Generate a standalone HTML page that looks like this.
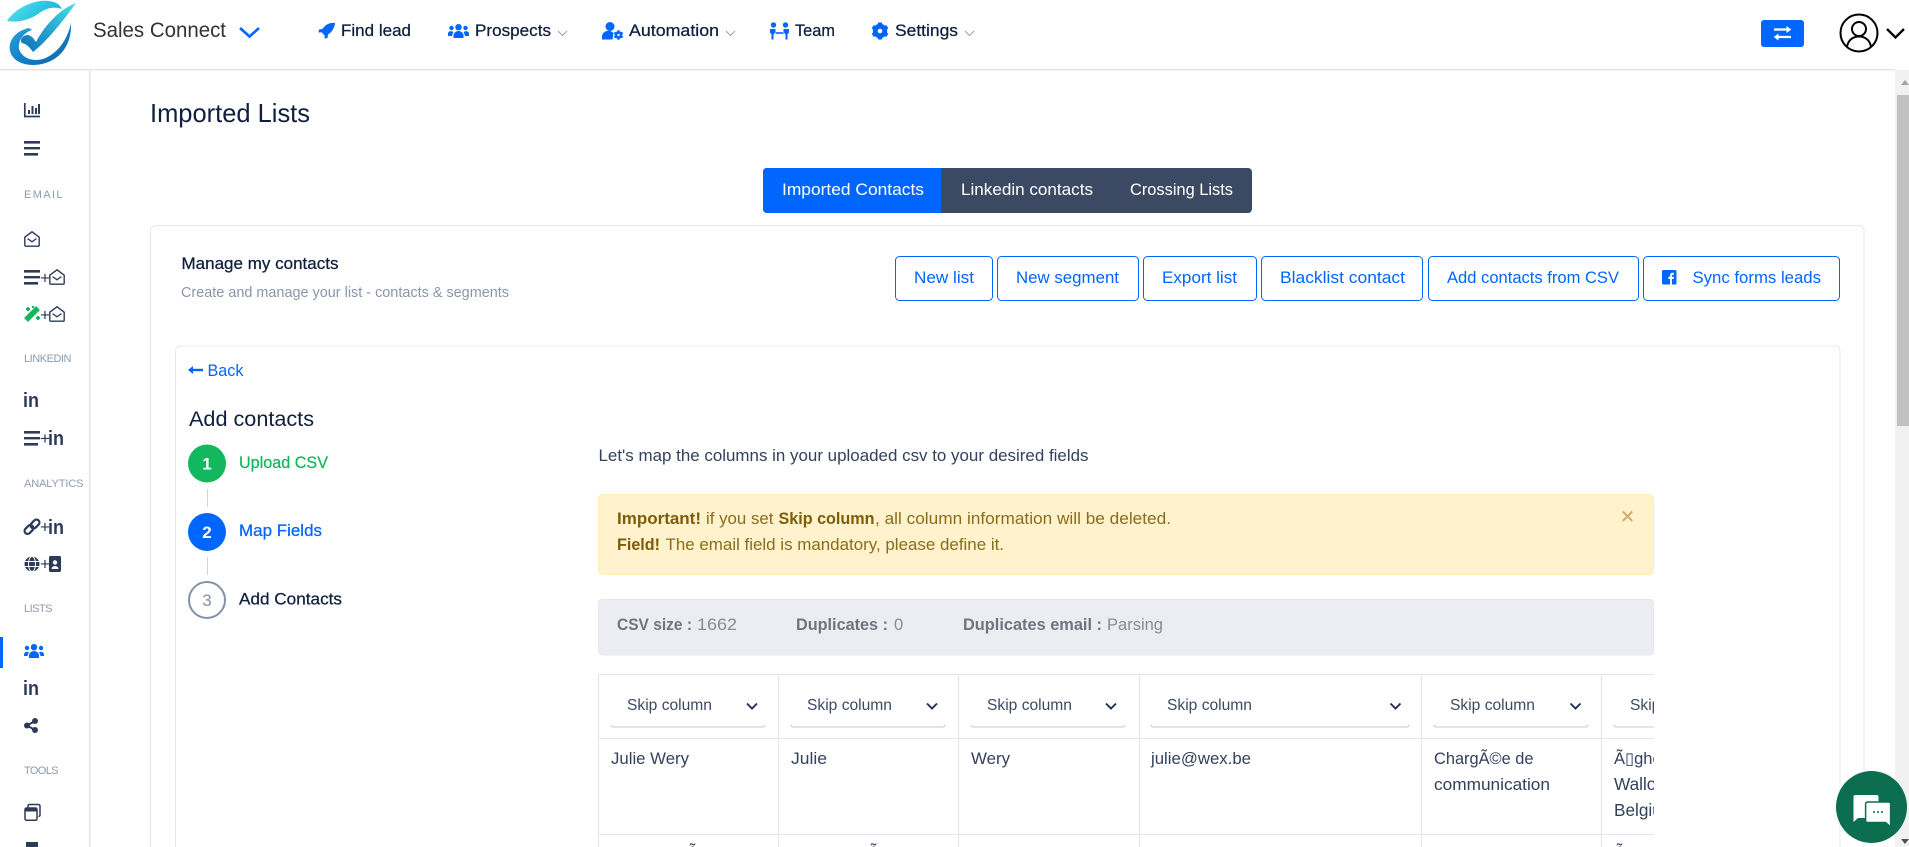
<!DOCTYPE html>
<html lang="en"><head><meta charset="utf-8"><title>Imported Lists</title>
<style>
html,body{margin:0;padding:0;background:#fff;width:1909px;height:847px;overflow:hidden}
svg{display:block}
text{font-family:"Liberation Sans",sans-serif;white-space:pre}
.m{stroke:currentColor;stroke-width:.25}
.nav{font-size:16.5px;fill:#0f1f3d;color:#0f1f3d}
.lb{font-size:11px;fill:#8c9bb0;letter-spacing:.5px}
.t{font-size:16.5px;fill:#33415c}
.sk{font-size:15.5px;fill:#3c4a63}
.bt{font-size:16.5px;fill:#0066ff}
.al{font-size:16.5px;fill:#8a6d1c}
.alb{font-size:16.5px;fill:#7d5c0a;color:#7d5c0a;font-weight:700}
.st{font-size:16.5px;fill:#6f7580;color:#6f7580;font-weight:700}
.sv{font-size:16.5px;fill:#868b95}
.ic{fill:#2d3b59}
.is{fill:none;stroke:#2d3b59;stroke-width:1.5}
.b{fill:#0066ff}
.pl{font-size:17px;fill:#2d3b59}
</style></head><body>
<svg width="1909" height="847" viewBox="0 0 1909 847" xmlns="http://www.w3.org/2000/svg">
<defs>
<linearGradient id="g1" x1="0" y1="0" x2="1" y2="0.4"><stop offset="0" stop-color="#5fe6ef"/><stop offset="1" stop-color="#12b5dc"/></linearGradient>
<linearGradient id="g2" x1="0" y1="0" x2="1" y2="1"><stop offset="0" stop-color="#2ba6e0"/><stop offset=".6" stop-color="#0f7cc4"/><stop offset="1" stop-color="#1a5f9e"/></linearGradient>
<linearGradient id="g3" x1="1" y1="0" x2="0" y2="1"><stop offset="0" stop-color="#45dfe8"/><stop offset="1" stop-color="#0d6fb8"/></linearGradient>
<clipPath id="tc"><rect x="598" y="670" width="1056" height="177"/></clipPath>
<g id="bars"><rect x="0" y="0" width="16" height="2.600" fill="#2d3b59"/><rect x="0" y="6" width="16" height="2.400" fill="#2d3b59"/><rect x="0" y="12" width="14" height="2.600" fill="#2d3b59"/></g>
<g id="mail"><path d="M.8 6.200 8 .8l7.200 5.400V14.200a1 1 0 0 1-1 1H1.800a1 1 0 0 1-1-1Z" fill="none" stroke="#2d3b59" stroke-width="1.400"/><path d="M3.600 7.600 8 10.800l4.400-3.200" fill="none" stroke="#2d3b59" stroke-width="1.300"/></g>
</defs>

<rect x="0" y="0" width="1909" height="847" fill="#fff"/>
<rect x="0" y="69" width="1895" height="1.500" fill="#e4e4ee"/>
<rect x="89" y="70" width="1.500" height="777" fill="#e4e4ee"/>

<rect x="1895" y="70" width="14" height="777" fill="#f1f1f1"/>
<path d="M1901 85l4-5 4 5Z" fill="#a3a3a3"/>
<rect x="1897" y="95" width="12" height="331" fill="#c1c1c1"/>

<!-- logo -->
<path d="M7 21C13 11 27 3 40 1 50 0 59 2 62 9 54 6 46 8 38 14 29 20 17 23 7 21Z" fill="url(#g1)"/>
<path d="M29 28C15 31 8 41 10 51 13 63 28 67 42 64 60 60 72 45 71 23 67 41 57 54 43 59 32 62 22 58 19 49 18 41 23 33 32 30Z" fill="url(#g2)"/>
<path d="M76 3C62 8 46 23 36 42 33 37 29 33 24 36 21 38 20 41 22 43 27 44 30 48 33 52 46 42 61 24 76 3Z" fill="url(#g3)"/>

<text x="93" y="37" font-size="21" fill="#333" textLength="133" lengthAdjust="spacingAndGlyphs">Sales Connect</text>
<path d="M240 28l9.500 8.500L259 28" fill="none" stroke="#0066ff" stroke-width="2.600"/>

<!-- nav -->
<path class="b" d="M335 23c-6-.5-10 2-12.500 6l-3.500.5 -.5 3 3-.2 3.200 3.200-.2 3 3-.5.500-3.500c4-2.500 6.500-6.500 7-11.500Z"/>
<text class="nav m" x="341" y="36" textLength="70" lengthAdjust="spacingAndGlyphs">Find lead</text>

<g class="b" transform="translate(448 24)"><circle cx="10.500" cy="3.200" r="3.200"/><circle cx="3.500" cy="4" r="2.200"/><circle cx="17.500" cy="4" r="2.200"/><path d="M5.500 14v-2.500a5 4.500 0 0 1 10 0V14Z"/><path d="M0 10.500a3 3 0 0 1 5.500-2 6 6 0 0 0-1.500 3.500H0Z"/><path d="M21 10.500a3 3 0 0 0-5.500-2 6 6 0 0 1 1.500 3.500H21Z"/></g>
<text class="nav m" x="475" y="36" textLength="76" lengthAdjust="spacingAndGlyphs">Prospects</text>
<path d="M558 31l4.500 4.500L567 31" fill="none" stroke="#99a1ad" stroke-width="1"/>

<g class="b" transform="translate(602 22)"><circle cx="8" cy="4.500" r="4.500"/><path d="M0 17.500v-2a6.500 6 0 0 1 11.500-4.500l-1 6.500Z"/><g transform="translate(16.500 13)"><circle r="2.700" fill="none" stroke="#0066ff" stroke-width="2.400"/><rect x="-1" y="-4.800" width="2" height="9.600"/><rect x="-1" y="-4.800" width="2" height="9.600" transform="rotate(60)"/><rect x="-1" y="-4.800" width="2" height="9.600" transform="rotate(120)"/><circle r="1.200" fill="#fff"/></g></g>
<text class="nav m" x="629" y="36" textLength="90" lengthAdjust="spacingAndGlyphs">Automation</text>
<path d="M726 31l4.500 4.500L735 31" fill="none" stroke="#99a1ad" stroke-width="1"/>

<g class="b" transform="translate(770 22)"><circle cx="3.500" cy="3" r="2.700"/><circle cx="15.500" cy="3" r="2.700"/><path d="M0 7h5.500v3l-2 2.500v5H1.500v-5L0 10.500Z"/><path d="M19 7h-5.500v3l2 2.500v5h2v-5l1.500-2Z"/><rect x="5.500" y="10.200" width="8" height="1.600"/></g>
<text class="nav m" x="795" y="36" textLength="40" lengthAdjust="spacingAndGlyphs">Team</text>

<g transform="translate(880 31)"><circle r="5.300" fill="none" stroke="#0066ff" stroke-width="3.800"/><g fill="#0066ff"><rect x="-2" y="-8.500" width="4" height="17"/><rect x="-2" y="-8.500" width="4" height="17" transform="rotate(60)"/><rect x="-2" y="-8.500" width="4" height="17" transform="rotate(120)"/></g><circle r="2.300" fill="#fff"/></g>
<text class="nav m" x="895" y="36" textLength="63" lengthAdjust="spacingAndGlyphs">Settings</text>
<path d="M965 31l4.500 4.500L974 31" fill="none" stroke="#99a1ad" stroke-width="1"/>

<rect x="1761" y="20" width="43" height="27" rx="3" fill="#0066ff"/>
<path d="M1774 29.500h15" stroke="#fff" stroke-width="2.300"/><path d="M1786.500 26l4.800 3.500-4.800 3.500Z" fill="#fff"/>
<path d="M1776 37h15" stroke="#fff" stroke-width="2.300"/><path d="M1778.500 33.500l-4.800 3.500 4.800 3.500Z" fill="#fff"/>

<circle cx="1859" cy="33" r="18.500" fill="none" stroke="#000" stroke-width="2"/>
<circle cx="1859" cy="29" r="7" fill="none" stroke="#000" stroke-width="2"/>
<path d="M1847 47c1-7 6-10.500 12-10.500s11 3.500 12 10.500" fill="none" stroke="#000" stroke-width="2"/>
<path d="M1887 29l8.500 8.500L1904 29" fill="none" stroke="#000" stroke-width="2.300"/>

<!-- sidebar -->
<path d="M24.800 103v13.500H40" fill="none" stroke="#2d3b59" stroke-width="1.700"/>
<g fill="#2d3b59"><rect x="28" y="110" width="2" height="4"/><rect x="31.500" y="106" width="2" height="8"/><rect x="35" y="108" width="2" height="6"/><rect x="38" y="104" width="2" height="10"/></g>
<use href="#bars" x="24" y="141"/>
<text class="lb" x="24" y="198" textLength="39">EMAIL</text>
<use href="#mail" x="24" y="231"/>
<use href="#bars" x="24" y="270"/><text class="pl" x="40" y="283.500">+</text><use href="#mail" x="49" y="269"/>
<path d="M26 320l12-12" stroke="#12b85e" stroke-width="5.500"/>
<g fill="#12b85e"><rect x="27" y="307" width="2" height="4"/><rect x="26" y="308" width="4" height="2"/><rect x="37" y="316" width="2" height="4"/><rect x="36" y="317" width="4" height="2"/><rect x="32" y="306" width="2" height="2"/></g>
<text class="pl" x="40" y="320.500">+</text><use href="#mail" x="49" y="306"/>
<text class="lb" x="24" y="362" textLength="48">LINKEDIN</text>
<text x="23" y="407" font-size="20" font-weight="700" fill="#2d3b59" textLength="16" lengthAdjust="spacingAndGlyphs">in</text>
<use href="#bars" x="24" y="431"/><text class="pl" x="40" y="444">+</text>
<text x="48" y="445" font-size="20" font-weight="700" fill="#2d3b59" textLength="16" lengthAdjust="spacingAndGlyphs">in</text>
<text class="lb" x="24" y="487" textLength="60">ANALYTICS</text>
<g fill="none" stroke="#2d3b59" stroke-width="2.200"><rect x="24" y="526.500" width="10" height="6" rx="3" transform="rotate(-45 29 529.500)"/><rect x="30" y="521" width="10" height="6" rx="3" transform="rotate(-45 35 524)"/></g>
<text class="pl" x="40" y="532.500">+</text>
<text x="48" y="534" font-size="20" font-weight="700" fill="#2d3b59" textLength="16" lengthAdjust="spacingAndGlyphs">in</text>
<circle cx="32" cy="564" r="7.500" class="ic"/><g stroke="#fff" stroke-width="1" fill="none"><path d="M24.500 561.500h15M24.500 566.500h15"/><ellipse cx="32" cy="564" rx="3.500" ry="7.500"/></g>
<text class="pl" x="40" y="569.500">+</text>
<rect x="49" y="556" width="12" height="16" rx="1.500" class="ic"/><circle cx="55" cy="562.500" r="2.200" fill="#fff"/><path d="M51.500 569a3.500 3 0 0 1 7 0Z" fill="#fff"/>
<text class="lb" x="24" y="612" textLength="29">LISTS</text>
<rect x="0" y="637" width="3" height="31" fill="#0066ff"/>
<g class="b" transform="translate(24 644)"><circle cx="10" cy="3.200" r="3.200"/><circle cx="3" cy="4" r="2.200"/><circle cx="17" cy="4" r="2.200"/><path d="M5 14v-2.500a5 4.500 0 0 1 10 0V14Z"/><path d="M0 10.500a3 3 0 0 1 5-2 6 6 0 0 0-1.500 3.500H0Z"/><path d="M20 10.500a3 3 0 0 0-5-2 6 6 0 0 1 1.500 3.500H20Z"/></g>
<text x="23" y="695" font-size="20" font-weight="700" fill="#2d3b59" textLength="16" lengthAdjust="spacingAndGlyphs">in</text>
<path d="M35 721l-8 4.500 8 4.500" fill="none" stroke="#2d3b59" stroke-width="2"/><g class="ic"><circle cx="35" cy="721" r="3"/><circle cx="27" cy="725.500" r="3"/><circle cx="35" cy="730" r="3"/></g>
<text class="lb" x="24" y="774" textLength="35">TOOLS</text>
<path d="M28 808v-2a1.500 1.500 0 0 1 1.500-1.500h9a1.500 1.500 0 0 1 1.500 1.500v9a1.500 1.500 0 0 1-1.500 1.500" fill="none" stroke="#2d3b59" stroke-width="1.500"/>
<rect x="25" y="808" width="12" height="12.300" rx="1.500" fill="#fff" stroke="#2d3b59" stroke-width="1.500"/><rect x="25" y="808" width="12" height="3.500" fill="#2d3b59"/>
<rect x="26" y="842" width="12" height="5" class="ic"/>

<!-- title + tabs -->
<text x="150" y="122" font-size="26" fill="#0f1f3d" textLength="160" lengthAdjust="spacingAndGlyphs">Imported Lists</text>
<rect x="763" y="168" width="489" height="45" rx="4" fill="#3b4963"/>
<path d="M767 168h174v45H767a4 4 0 0 1-4-4v-37a4 4 0 0 1 4-4Z" fill="#0066ff"/>
<text x="782" y="195" font-size="16.500" fill="#fff" textLength="142" lengthAdjust="spacingAndGlyphs">Imported Contacts</text>
<text x="961" y="195" font-size="16.500" fill="#fff" textLength="132" lengthAdjust="spacingAndGlyphs">Linkedin contacts</text>
<text x="1130" y="195" font-size="16.500" fill="#fff" textLength="103" lengthAdjust="spacingAndGlyphs">Crossing Lists</text>

<!-- outer card -->
<path d="M150.500 847V230.500a5 5 0 0 1 5-5H1859a5 5 0 0 1 5 5V847" fill="none" stroke="#e6e8f0" stroke-width="1"/>
<text x="181.500" y="269" font-size="16.500" fill="#0f1f3d" color="#0f1f3d" class="m" textLength="157" lengthAdjust="spacingAndGlyphs">Manage my contacts</text>
<text x="181" y="297" font-size="14.500" fill="#8a96a8" textLength="328" lengthAdjust="spacingAndGlyphs">Create and manage your list - contacts &amp; segments</text>

<g fill="#fff" stroke="#0066ff" stroke-width="1">
<rect x="895.500" y="256.500" width="97" height="44" rx="4"/>
<rect x="997.500" y="256.500" width="141" height="44" rx="4"/>
<rect x="1143.500" y="256.500" width="113" height="44" rx="4"/>
<rect x="1261.500" y="256.500" width="161" height="44" rx="4"/>
<rect x="1428.500" y="256.500" width="210" height="44" rx="4"/>
<rect x="1643.500" y="256.500" width="196" height="44" rx="4"/>
</g>
<text class="bt" x="914" y="283" textLength="60" lengthAdjust="spacingAndGlyphs">New list</text>
<text class="bt" x="1016" y="283" textLength="103" lengthAdjust="spacingAndGlyphs">New segment</text>
<text class="bt" x="1162" y="283" textLength="75" lengthAdjust="spacingAndGlyphs">Export list</text>
<text class="bt" x="1280" y="283" textLength="125" lengthAdjust="spacingAndGlyphs">Blacklist contact</text>
<text class="bt" x="1447" y="283" textLength="172" lengthAdjust="spacingAndGlyphs">Add contacts from CSV</text>
<rect x="1662" y="270" width="14.500" height="14.500" rx="1.500" fill="#0066ff"/>
<path d="M1670 284.500v-5.500h-1.700v-2.200h1.700v-1.500c0-1.700 1-2.500 2.400-2.500h1.500v2h-1c-.7 0-1 .4-1 1v1h2l-.3 2.200h-1.700v5.500Z" fill="#fff"/>
<text class="bt" x="1692.500" y="283" textLength="128.500" lengthAdjust="spacingAndGlyphs">Sync forms leads</text>

<!-- inner card -->
<path d="M175.500 847V351a5 5 0 0 1 5-5H1835a5 5 0 0 1 5 5V847" fill="none" stroke="#e6e8f0" stroke-width="1"/>
<path d="M193 366l-5 4 5 4Z" fill="#0066ff"/><rect x="192" y="368.800" width="11" height="2.400" fill="#0066ff"/>
<text x="207.500" y="376" font-size="16.500" fill="#0066ff" textLength="36" lengthAdjust="spacingAndGlyphs">Back</text>
<text x="189" y="426" font-size="21.500" fill="#0f1f3d" textLength="125" lengthAdjust="spacingAndGlyphs">Add contacts</text>

<!-- stepper -->
<circle cx="207" cy="463.500" r="19" fill="#12b85e"/>
<text x="207" y="469.500" font-size="17" font-weight="700" fill="#fff" text-anchor="middle">1</text>
<rect x="207" y="489" width="1" height="18" fill="#cfd3da"/>
<circle cx="207" cy="532" r="19" fill="#0066ff"/>
<text x="207" y="538" font-size="17" font-weight="700" fill="#fff" text-anchor="middle">2</text>
<rect x="207" y="557" width="1" height="18" fill="#cfd3da"/>
<circle cx="207" cy="600" r="18" fill="#fff" stroke="#8492a6" stroke-width="2"/>
<text x="207" y="606" font-size="17" fill="#8492a6" text-anchor="middle">3</text>
<text x="239" y="468" font-size="16.500" fill="#12b85e" color="#12b85e" class="m" textLength="89" lengthAdjust="spacingAndGlyphs">Upload CSV</text>
<text x="239" y="536" font-size="16.500" fill="#0066ff" color="#0066ff" class="m" textLength="83" lengthAdjust="spacingAndGlyphs">Map Fields</text>
<text x="239" y="604.500" font-size="16.500" fill="#0f1f3d" color="#0f1f3d" class="m" textLength="103" lengthAdjust="spacingAndGlyphs">Add Contacts</text>

<!-- right column -->
<text class="t" x="598.500" y="461" textLength="490" lengthAdjust="spacingAndGlyphs">Let's map the columns in your uploaded csv to your desired fields</text>

<rect x="598.500" y="494.500" width="1055" height="80" rx="4" fill="#fff2cc" stroke="#ffeeba"/>
<text class="alb" x="617" y="524" textLength="84" lengthAdjust="spacingAndGlyphs">Important!</text>
<text class="al" x="706" y="524" textLength="67.500" lengthAdjust="spacingAndGlyphs">if you set</text>
<text class="alb" x="778.500" y="524" textLength="96" lengthAdjust="spacingAndGlyphs">Skip column</text>
<text class="al" x="875" y="524" textLength="296" lengthAdjust="spacingAndGlyphs">, all column information will be deleted.</text>
<text class="alb" x="617" y="550" textLength="43" lengthAdjust="spacingAndGlyphs">Field!</text>
<text class="al" x="665.500" y="550" textLength="338.500" lengthAdjust="spacingAndGlyphs">The email field is mandatory, please define it.</text>
<path d="M1622.800 511.500l9.500 9.500M1632.300 511.500l-9.500 9.500" stroke="#c9b06b" stroke-width="2" fill="none"/>

<rect x="598.500" y="599.500" width="1055" height="55.500" rx="4" fill="#ecedf2" stroke="#e6e7ed"/>
<text class="st" x="617" y="630" textLength="75" lengthAdjust="spacingAndGlyphs">CSV size :</text>
<text class="sv" x="697" y="630" textLength="40" lengthAdjust="spacingAndGlyphs">1662</text>
<text class="st" x="796" y="630" textLength="92" lengthAdjust="spacingAndGlyphs">Duplicates :</text>
<text class="sv" x="894" y="630">0</text>
<text class="st" x="963" y="630" textLength="139" lengthAdjust="spacingAndGlyphs">Duplicates email :</text>
<text class="sv" x="1107" y="630" textLength="56" lengthAdjust="spacingAndGlyphs">Parsing</text>

<!-- table -->
<g clip-path="url(#tc)">
<g fill="#e3e4ef">
<rect x="598" y="674" width="1056" height="1"/>
<rect x="598" y="738" width="1056" height="1"/>
<rect x="598" y="834" width="1056" height="1"/>
<rect x="598" y="674" width="1" height="173"/>
<rect x="778" y="674" width="1" height="173"/>
<rect x="958" y="674" width="1" height="173"/>
<rect x="1139" y="674" width="1" height="173"/>
<rect x="1421" y="674" width="1" height="173"/>
<rect x="1601" y="674" width="1" height="173"/>
</g>
<g fill="none" stroke="#c3c9d4" stroke-width="1">
<path d="M611 724.500q0 2.500 3 2.500h148q3 0 3-2.500"/>
<path d="M791 724.500q0 2.500 3 2.500h148q3 0 3-2.500"/>
<path d="M971 724.500q0 2.500 3 2.500h148q3 0 3-2.500"/>
<path d="M1151 724.500q0 2.500 3 2.500h252q3 0 3-2.500"/>
<path d="M1434 724.500q0 2.500 3 2.500h148q3 0 3-2.500"/>
<path d="M1614 724.500q0 2.500 3 2.500h148q3 0 3-2.500"/>
</g>
<text class="sk" x="627" y="710" textLength="85" lengthAdjust="spacingAndGlyphs">Skip column</text>
<text class="sk" x="807" y="710" textLength="85" lengthAdjust="spacingAndGlyphs">Skip column</text>
<text class="sk" x="987" y="710" textLength="85" lengthAdjust="spacingAndGlyphs">Skip column</text>
<text class="sk" x="1167" y="710" textLength="85" lengthAdjust="spacingAndGlyphs">Skip column</text>
<text class="sk" x="1450" y="710" textLength="85" lengthAdjust="spacingAndGlyphs">Skip column</text>
<text class="sk" x="1630" y="710" textLength="85" lengthAdjust="spacingAndGlyphs">Skip column</text>
<g fill="none" stroke="#22304d" stroke-width="1.900">
<path d="M747 703.500l5 5 5-5"/><path d="M927 703.500l5 5 5-5"/><path d="M1106 703.500l5 5 5-5"/><path d="M1390.500 703.500l5 5 5-5"/><path d="M1570.500 703.500l5 5 5-5"/>
</g>
<text class="t" x="611" y="764" textLength="78" lengthAdjust="spacingAndGlyphs">Julie Wery</text>
<text class="t" x="791" y="764" textLength="36" lengthAdjust="spacingAndGlyphs">Julie</text>
<text class="t" x="971" y="764" textLength="39" lengthAdjust="spacingAndGlyphs">Wery</text>
<text class="t" x="1151" y="764" textLength="100" lengthAdjust="spacingAndGlyphs">julie@wex.be</text>
<text class="t" x="1434" y="764" textLength="99.500" lengthAdjust="spacingAndGlyphs">ChargÃ©e de</text>
<text class="t" x="1434" y="790" textLength="116" lengthAdjust="spacingAndGlyphs">communication</text>
<text class="t" x="1614" y="764" font-size="17">Ã▯ghe</text>
<text class="t" x="1614" y="790" style="font-size:17.200px">Wallonia</text>
<text class="t" x="1614" y="816" style="font-size:17.200px">Belgium</text>
<text class="t" x="687" y="858">Ã</text>
<text class="t" x="868" y="858">Ã</text>
<text class="t" x="1614" y="858">Ã</text>
</g>

<path d="M1901 839l4 5 4-5Z" fill="#505050"/>
<ellipse cx="1871.500" cy="807" rx="35.500" ry="36" fill="#0a6e4f"/>
<path d="M1856 795h20.500a2 2 0 0 1 2 2v21h-20.500l-4.500 4V797a2 2 0 0 1 2-2Z" fill="#fff"/>
<path d="M1867.600 802h21a2 2 0 0 1 2 2v23l-5-4.500h-18a2 2 0 0 1-2-2V804a2 2 0 0 1 2-2Z" fill="#fff" stroke="#0a6e4f" stroke-width="1.500"/>
<g fill="#0a6e4f"><circle cx="1874" cy="812" r="1"/><circle cx="1878" cy="812" r="1"/><circle cx="1882" cy="812" r="1"/></g>
</svg>
</body></html>
